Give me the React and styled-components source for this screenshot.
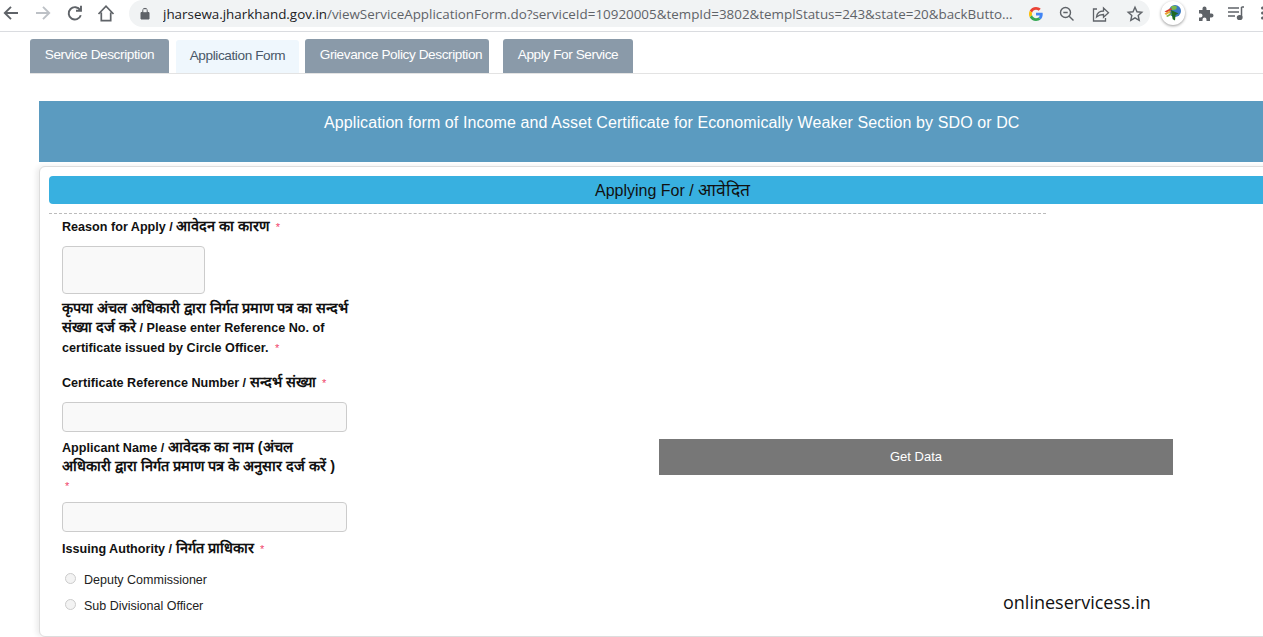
import React from 'react';
import styled, { createGlobalStyle } from 'styled-components';

const Global = createGlobalStyle`
  html, body { margin: 0; padding: 0; height: 637px; overflow: hidden; background: #fff; }
  body { font-family: "Liberation Sans", Arial, sans-serif; }
  * { box-sizing: border-box; }
`;

const Page = styled.div`
  width: 1263px; height: 637px; overflow: hidden; position: relative;
  display: flex; flex-direction: column;
`;
const BrowserBar = styled.div`
  height: 32px; flex: none; display: flex; align-items: flex-start;
  border-bottom: 1px solid #dadce0; background: #fff;
`;
const NavButtons = styled.div`
  width: 129px; height: 26px; flex: none; display: flex; align-items: center;
  padding-left: 1px;
`;
const NavIcon = styled.svg`
  width: 20px; height: 20px; flex: none; margin-right: ${p => p.$gap}px;
`;
const Omnibox = styled.div`
  width: 1021px; height: 27px; flex: none; display: flex; align-items: center;
  background: #f1f3f4; border-radius: 13.5px;
  padding-left: 11px;
`;
const Url = styled.div`
  font: 13.4px "Open Sans", "Noto Sans", sans-serif; color: #5f6368; white-space: nowrap;
  margin-left: 13px; width: 858px; overflow: hidden; flex: none;
  b { font-weight: 400; color: #202124; }
`;
const OmniIcons = styled.div`
  display: flex; align-items: center; margin-left: 8px; gap: 15px;
`;
const ToolIcons = styled.div`
  display: flex; align-items: center; height: 26px; padding-left: 11px; gap: 12px; flex: none;
`;
const Ext = styled.div`
  width: 24px; height: 24px; border-radius: 50%; background: #fff; box-shadow: 0 1px 3px rgba(0,0,0,.4);
  display: flex; align-items: center; justify-content: center; flex: none;
`;
const MenuDots = styled.svg`
  width: 6px; height: 18px; flex: none;
`;

const Tabs = styled.div`
  margin: 7px 0 0 30px; height: 35px; flex: none; display: flex; align-items: flex-end;
  border-bottom: 1px solid #e3e3e3;
`;
const Tab = styled.div`
  height: ${p => (p.$active ? 33 : 34)}px; width: ${p => p.$w}px; margin-right: ${p => p.$mr}px;
  display: flex; align-items: center; justify-content: center; padding: 0 0 ${p => (p.$active ? 2 : 3)}px ${p => p.$pl || 0}px;
  font-size: 13.6px; letter-spacing: -0.4px; border-radius: 3px 3px 0 0;
  color: ${p => (p.$active ? '#495768' : '#fff')};
  background: ${p => (p.$active ? '#eff7fd' : '#8a9aa9')};
`;

const Banner = styled.div`
  margin: 27px -20px 0 39px; height: 61px; flex: none; background: #5b9bc0; color: #fff;
  font-size: 16px; letter-spacing: 0.1px; padding: 12px 0 0 285px; line-height: 20px;
`;

const Card = styled.div`
  margin: 4px -20px 0 39px; flex: 1; background: #fff; border: 1px solid #ddd;
  border-radius: 6px; padding: 9px 0 0 9px; box-shadow: -3px 0 5px rgba(0,0,0,.07);
`;
const SectionHead = styled.div`
  height: 28px; background: #38b0e0; border-radius: 4px; display: flex; align-items: center;
  font-size: 16px; line-height: 20px; color: #111; padding: 1px 0 0 546px; white-space: pre;
`;
const HeadHindi = styled.span`
  font-size: 17.5px; line-height: 1;
`;
const DashedRule = styled.div`
  width: 997px; margin-top: 9px; border-top: 1px dashed #bbb;
`;
const FormRow = styled.div`
  display: flex; align-items: flex-start;
`;
const Fields = styled.div`
  width: 300px; margin-left: 13px; flex: none; display: flex; flex-direction: column;
`;
const Label = styled.div`
  font-size: 12.6px; font-weight: 700; line-height: 19.5px; color: #111;
  margin-top: ${p => p.$mt || 0}px; margin-bottom: ${p => p.$mb || 0}px;
`;
const Hindi = styled.span`
  font-size: 14.5px; font-weight: 700; line-height: 1;
`;
const Star = styled.span`
  color: #f0436a; font-weight: 400; font-size: 11px; line-height: 1; margin-left: 3px;
`;
const BlockStar = styled.div`
  color: #f0436a; font-size: 11px; line-height: 16px; padding-left: 3px; margin-bottom: 8px;
`;
const Input = styled.div`
  width: ${p => p.$w}px; height: ${p => p.$h}px; background: #f9f9f9;
  border: 1px solid #ccc; border-radius: 4px; flex: none;
`;
const Radio = styled.div`
  display: flex; align-items: center; height: 26px; font-size: 12.5px; color: #222; padding-left: 3px; gap: 8px;
`;
const RadioDot = styled.span`
  width: 11px; height: 11px; border-radius: 50%; background: #f3f3f3; border: 1px solid #ccc;
  flex: none; margin-top: -3px;
`;
const Actions = styled.div`
  margin: 225px 0 0 297px; flex: none;
`;
const GetData = styled.button`
  width: 514px; height: 36px; background: #777; border: 0; color: #fff; padding: 0 0 2px;
  font: 13px "Liberation Sans", Arial, sans-serif; display: block;
`;
const Watermark = styled.div`
  position: absolute; left: 1003px; top: 590px; font: 18px "Open Sans", "Noto Sans", sans-serif; color: #111; line-height: 24px;
`;

const GIcon = () => (
  <svg width="14" height="14" viewBox="0 0 48 48">
    <path fill="#EA4335" d="M24 9.5c3.500 0 6.700 1.200 9.200 3.600l6.900-6.900C35.900 2.400 30.500 0 24 0 14.600 0 6.500 5.400 2.600 13.200l8 6.200C12.500 13.700 17.800 9.500 24 9.500z"/>
    <path fill="#4285F4" d="M47 24.500c0-1.600-.1-3.100-.4-4.500H24v9h12.900c-.6 3-2.200 5.500-4.800 7.200l7.700 6C44.300 38 47 31.800 47 24.500z"/>
    <path fill="#FBBC05" d="M10.600 28.600c-.5-1.400-.8-3-.8-4.600s.3-3.200.8-4.600l-8-6.200C.9 16.500 0 20.100 0 24s.9 7.500 2.600 10.800l8-6.200z"/>
    <path fill="#34A853" d="M24 48c6.500 0 11.900-2.100 15.900-5.800l-7.700-6c-2.200 1.400-4.900 2.300-8.200 2.300-6.200 0-11.500-4.200-13.400-9.900l-8 6.200C6.500 42.600 14.600 48 24 48z"/>
  </svg>
);

export default function App() {
  return (
    <Page>
      <Global />
      <BrowserBar>
        <NavButtons>
          <NavIcon viewBox="0 0 20 20" $gap={12}><path d="M17 10H4.500M10 3.800 3.800 10l6.200 6.200" fill="none" stroke="#5f6368" strokeWidth="1.900"/></NavIcon>
          <NavIcon viewBox="0 0 20 20" $gap={12}><path d="M3 10h12.500M10 3.800l6.200 6.200-6.200 6.200" fill="none" stroke="#bdc1c6" strokeWidth="1.900"/></NavIcon>
          <NavIcon viewBox="0 0 20 20" $gap={11}><path d="M15.800 12.300a6.200 6.200 0 1 1-.6-5.200M16 2.800v5h-5" fill="none" stroke="#5f6368" strokeWidth="1.900"/></NavIcon>
          <NavIcon viewBox="0 0 20 20" $gap={0}><path d="M2.500 11 10 3.200l7.500 7.800M5.300 9.500v8.200h9.400V9.500" fill="none" stroke="#5f6368" strokeWidth="1.700"/></NavIcon>
        </NavButtons>
        <Omnibox>
          <svg width="10" height="13" viewBox="0 0 10 13"><path d="M1 5.500h8v6.500H1zM2.800 5.500V3.500a2.200 2.200 0 0 1 4.400 0v2" fill="#5f6368" stroke="#5f6368" strokeWidth="1"/><rect x="3.300" y="2.200" width="3.400" height="3" fill="#f1f3f4"/></svg>
          <Url><b>jharsewa.jharkhand.gov.in</b>/viewServiceApplicationForm.do?serviceId=10920005&amp;tempId=3802&amp;templStatus=243&amp;state=20&amp;backButto...</Url>
          <OmniIcons>
            <GIcon />
            <svg width="18" height="18" viewBox="0 0 18 18" fill="none" stroke="#5f6368" strokeWidth="1.400"><circle cx="7.500" cy="7.500" r="5"/><path d="M11.200 11.200 15.500 15.500M5.300 7.500h4.400"/></svg>
            <svg width="20" height="18" viewBox="0 0 20 18" fill="none" stroke="#5f6368" strokeWidth="1.300"><path d="M6 4H2.500v12h12v-3"/><path d="M5.500 12c.5-4 3.500-6 7-6V3l5 4.700-5 4.600V9.500c-3 0-5 .7-7 2.500z"/></svg>
            <svg width="18" height="18" viewBox="0 0 18 18" fill="none" stroke="#5f6368" strokeWidth="1.400"><path d="M9 2.300l2 4.500 4.800.5-3.600 3.200 1 4.800L9 12.800 4.800 15.300l1-4.800L2.200 7.300 7 6.800z"/></svg>
          </OmniIcons>
        </Omnibox>
        <ToolIcons>
          <Ext>
            <svg width="20" height="20" viewBox="0 0 20 20">
              <circle cx="12" cy="8" r="6" fill="#3a78c2"/>
              <path d="M8 3.500c2-1 5-1 6 .5l-1 2.500-4 .5z" fill="#79b84a"/>
              <path d="M1.500 8.500 8 5l1 1.600-5.500 3z" fill="#d8442f"/>
              <path d="M1.500 10.500 7 7.500l1 1.600-5 3z" fill="#e9a52d"/>
              <path d="M3 13l5-3 .8 1.500-4.300 2.500z" fill="#7cb342"/>
              <path d="M8 7l7.500 3.500-3 1.500-.5 5.500-2.300-1.200z" fill="#1f6a24"/>
            </svg>
          </Ext>
          <svg width="18" height="18" viewBox="0 0 18 18"><path d="M2 6h3.500V4.500a2 2 0 0 1 4 0V6H13v3.500h1.500a2 2 0 0 1 0 4H13V17H9.500v-1.500a2 2 0 0 0-4 0V17H2v-3.500h1.500a2 2 0 0 0 0-4H2z" fill="#5f6368"/></svg>
          <svg width="18" height="18" viewBox="0 0 18 18" fill="none" stroke="#5f6368" strokeWidth="1.500"><path d="M1 4h11M1 8h11M1 12h7"/><path d="M14.500 3v10" /><ellipse cx="12.700" cy="13.500" rx="2.200" ry="1.800" fill="#5f6368"/><path d="M14.500 3h2.500"/></svg>
          <MenuDots viewBox="0 0 6 18"><circle cx="5.500" cy="4" r="1.500" fill="#5f6368"/><circle cx="5.500" cy="9" r="1.500" fill="#5f6368"/><circle cx="5.500" cy="14" r="1.500" fill="#5f6368"/></MenuDots>
        </ToolIcons>
      </BrowserBar>

      <Tabs>
        <Tab $w={139} $mr={7}>Service Description</Tab>
        <Tab $w={123} $mr={6} $active>Application Form</Tab>
        <Tab $w={184} $mr={14} $pl={8}>Grievance Policy Description</Tab>
        <Tab $w={130} $mr={0}>Apply For Service</Tab>
      </Tabs>

      <Banner>Application form of Income and Asset Certificate for Economically Weaker Section by SDO or DC</Banner>

      <Card>
        <SectionHead>Applying For / <HeadHindi>आवेदित</HeadHindi></SectionHead>
        <DashedRule />
        <FormRow>
          <Fields>
            <Label $mt={4} $mb={8}>Reason for Apply / <Hindi>आवेदन का कारण</Hindi> <Star>*</Star></Label>
            <Input $w={143} $h={48} />
            <Label $mt={6}><Hindi>कृपया अंचल अधिकारी द्वारा निर्गत प्रमाण पत्र का सन्दर्भ<br />संख्या दर्ज करे</Hindi> / Please enter Reference No. of<br />certificate issued by Circle Officer. <Star>*</Star></Label>
            <Label $mt={16} $mb={8}>Certificate Reference Number / <Hindi>सन्दर्भ संख्या</Hindi> <Star>*</Star></Label>
            <Input $w={285} $h={30} />
            <Label $mt={7}>Applicant Name / <Hindi>आवेदक का नाम (अंचल<br />अधिकारी द्वारा निर्गत प्रमाण पत्र के अनुसार दर्ज करें )</Hindi></Label>
            <BlockStar>*</BlockStar>
            <Input $w={285} $h={30} />
            <Label $mt={8} $mb={8}>Issuing Authority / <Hindi>निर्गत प्राधिकार</Hindi> <Star>*</Star></Label>
            <Radio><RadioDot />Deputy Commissioner</Radio>
            <Radio><RadioDot />Sub Divisional Officer</Radio>
          </Fields>
          <Actions>
            <GetData>Get Data</GetData>
          </Actions>
        </FormRow>
      </Card>
      <Watermark>onlineservicess.in</Watermark>
    </Page>
  );
}
